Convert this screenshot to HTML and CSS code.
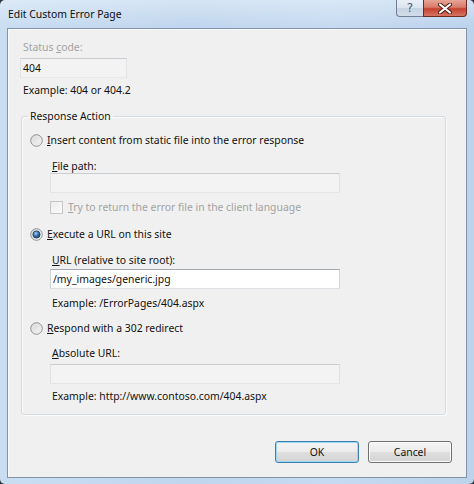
FILE: index.html
```html
<!DOCTYPE html>
<html>
<head>
<meta charset="utf-8">
<link rel="stylesheet" href="styles.css">
</head>
<body>
<div class="window">
  <div class="titlebar">
    <div class="title">Edit Custom Error Page</div>
    <div class="caption-buttons">
      <div class="cap-btn help"><span class="q">?</span></div>
      <div class="cap-btn close">
        <svg width="14" height="11" viewBox="0 0 14 11"><path d="M2 1.5 L12 9.5 M12 1.5 L2 9.5" stroke="#4a1a14" stroke-width="4" stroke-linecap="round"/><path d="M2 1.5 L12 9.5 M12 1.5 L2 9.5" stroke="#ffffff" stroke-width="2.2" stroke-linecap="round"/></svg>
      </div>
    </div>
  </div>
  <div class="client">
    <div class="status-label disabled">Status <u>c</u>ode:</div>
    <div class="textbox readonly status-box">404</div>
    <div class="status-example">Example: 404 or 404.2</div>

    <fieldset class="group">
      <legend>Response Action</legend>

      <div class="option opt1">
        <svg class="radio" width="13" height="13" viewBox="0 0 13 13"><defs><linearGradient id="rg1" x1="0" y1="0" x2="1" y2="1"><stop offset="0" stop-color="#d2d2d2"/><stop offset="1" stop-color="#fbfbfb"/></linearGradient></defs><circle cx="6.5" cy="6.5" r="5.8" fill="url(#rg1)" stroke="#8f9293" stroke-width="1"/><circle cx="6.5" cy="6.5" r="4" fill="none" stroke="#e8e8e8" stroke-width="1"/></svg>
        <span><u>I</u>nsert content from static file into the error response</span>
      </div>
      <div class="sub">
        <div class="field-label l-file"><u>F</u>ile path:</div>
        <div class="textbox disabled-box"></div>
        <div class="check-row disabled">
          <span class="checkbox"></span>
          <span><u>T</u>ry to return the error file in the client language</span>
        </div>
      </div>

      <div class="option opt2">
        <svg class="radio" width="13" height="13" viewBox="0 0 13 13"><defs><linearGradient id="rg2" x1="0" y1="0" x2="1" y2="1"><stop offset="0" stop-color="#d2d2d2"/><stop offset="1" stop-color="#fbfbfb"/></linearGradient><radialGradient id="dot" cx="0.4" cy="0.35" r="0.7"><stop offset="0" stop-color="#a9d3f5"/><stop offset="0.45" stop-color="#3f7cb9"/><stop offset="1" stop-color="#14395f"/></radialGradient></defs><circle cx="6.5" cy="6.5" r="5.8" fill="url(#rg2)" stroke="#8f9293" stroke-width="1"/><circle cx="6.5" cy="6.5" r="3.6" fill="url(#dot)" stroke="#1e3d5c" stroke-width="0.8"/></svg>
        <span><u>E</u>xecute a URL on this site</span>
      </div>
      <div class="sub">
        <div class="field-label l-url"><u>U</u>RL (relative to site root):</div>
        <div class="textbox normal">/my_images/generic.jpg</div>
        <div class="example ex-url">Example: /ErrorPages/404.aspx</div>
      </div>

      <div class="option opt3">
        <svg class="radio" width="13" height="13" viewBox="0 0 13 13"><defs><linearGradient id="rg3" x1="0" y1="0" x2="1" y2="1"><stop offset="0" stop-color="#d2d2d2"/><stop offset="1" stop-color="#fbfbfb"/></linearGradient></defs><circle cx="6.5" cy="6.5" r="5.8" fill="url(#rg3)" stroke="#8f9293" stroke-width="1"/><circle cx="6.5" cy="6.5" r="4" fill="none" stroke="#e8e8e8" stroke-width="1"/></svg>
        <span><u>R</u>espond with a 302 redirect</span>
      </div>
      <div class="sub">
        <div class="field-label l-abs"><u>A</u>bsolute URL:</div>
        <div class="textbox disabled-box abs-box"></div>
        <div class="example ex-abs">Example: http://www.contoso.com/404.aspx</div>
      </div>
    </fieldset>

    <div class="buttons">
      <div class="btn default">OK</div>
      <div class="btn">Cancel</div>
    </div>
  </div>
</div>
</body>
</html>
```
FILE: styles.css
```css
html, body {
  margin: 0;
  padding: 0;
  background: #30363f;
}
body {
  font-family: "Noto Sans", "Open Sans", sans-serif;
  font-size: 10.4px;
  color: #111;
}
.window {
  width: 474px;
  height: 484px;
  box-sizing: border-box;
  padding: 0 7px 6px 7px;
  display: flex;
  flex-direction: column;
  border-radius: 5px;
  background:
    linear-gradient(180deg, rgba(255,255,255,0.35) 0px, rgba(255,255,255,0) 26px),
    linear-gradient(90deg, #cadef2 0%, #c0d6ee 40%, #c6dbf1 70%, #bcd3ec 100%);
}
.titlebar {
  height: 28px;
  flex: none;
  display: flex;
  justify-content: space-between;
  align-items: flex-start;
}
.title {
  margin: 6px 0 0 1px;
  line-height: 16px;
  font-size: 10.4px;
  color: #0c0c0c;
}
.caption-buttons {
  display: flex;
}
.cap-btn {
  height: 17px;
  box-sizing: border-box;
  display: flex;
  align-items: center;
  justify-content: center;
  border: 1px solid #6f7f95;
  border-top: none;
}
.help {
  width: 27px;
  border-right: none;
  border-radius: 0 0 0 4px;
  background: linear-gradient(180deg, #e9eff6 0%, #dbe4ef 48%, #c7d3e2 52%, #d3dde9 100%);
}
.help .q {
  font-family: "DejaVu Sans", sans-serif;
  font-size: 12px;
  line-height: 12px;
  color: #4e5c70;
}
.close {
  width: 44px;
  border-color: #6b2b22;
  border-radius: 0 0 4px 0;
  background: linear-gradient(180deg, #e6a596 0%, #d97a69 45%, #c4412f 55%, #d57563 100%);
}
.client {
  flex: 1;
  background: #f0f0f0;
  border: 1px solid #8293a8;
  box-shadow: inset 1px 1px 0 #fafafa;
  padding: 10px 0 0 0;
  display: flex;
  flex-direction: column;
}
.disabled { color: #a3a3a3; }
.status-label {
  margin-left: 15px;
  line-height: 16px;
  height: 16px;
}
.textbox {
  height: 20px;
  box-sizing: border-box;
  line-height: 18px;
  padding-left: 2px;
  border: 1px solid #cfd3d7;
}
.status-box {
  margin: 3px 0 0 12px;
  width: 107px;
  background: #f3f3f3;
  border-color: #c9cdd2 #e0e3e6 #e6e8ea #e0e3e6;
  padding-left: 2px;
}
.status-example {
  margin: 4px 0 0 15px;
  line-height: 16px;
  height: 16px;
}
.group {
  margin: 10px 0 0 13px;
  width: 425px;
  box-sizing: border-box;
  border: 1px solid #d3dbe1;
  border-radius: 3px;
  box-shadow: inset 1px 1px 0 #fcfcfc, 1px 1px 0 #fcfcfc;
  padding: 0 0 10px 0;
  min-width: 0;
}
.group legend {
  margin-left: 6px;
  padding: 0 2px;
  line-height: 16px;
  height: 16px;
}
.option {
  display: flex;
  align-items: center;
  gap: 4px;
  height: 16px;
  padding-left: 8px;
}
.radio { flex: none; }
.opt1 { margin-top: 8px; }
.opt2 { margin-top: 11px; }
.opt3 { margin-top: 9px; }
.sub {
  padding-left: 28px;
  display: flex;
  flex-direction: column;
}
.field-label {
  margin-left: 2px;
  height: 14px;
  line-height: 14px;
}
.l-file { margin-top: 11px; }
.l-url { margin-top: 11px; }
.l-abs { margin-top: 10px; }
.sub .textbox {
  width: 290px;
}
.l-url + .textbox { margin-top: 2px; }
.abs-box { margin-top: 4px; }
.disabled-box {
  background: #f3f3f3;
  border-color: #c9cdd2 #dfe2e5 #e4e6e8 #dfe2e5;
}
.normal {
  background: #ffffff;
  border-color: #a4aab2 #d0d4da #dde1e6 #d0d4da;
  color: #111;
}
.check-row {
  margin-top: 6px;
  display: flex;
  align-items: center;
  gap: 5px;
  height: 16px;
}
.checkbox {
  width: 13px;
  height: 13px;
  box-sizing: border-box;
  border: 1px solid #c5c7c9;
  background: linear-gradient(135deg, #ececec, #fbfbfb);
  flex: none;
}
.example {
  margin-left: 2px;
  line-height: 16px;
  height: 16px;
}
.ex-url { margin-top: 6px; }
.ex-abs { margin-top: 4px; }
.buttons {
  margin-top: 26px;
  margin-right: 14px;
  display: flex;
  justify-content: flex-end;
  gap: 9px;
}
.btn {
  width: 84px;
  height: 22px;
  box-sizing: border-box;
  border: 1px solid #707070;
  border-radius: 3px;
  background: linear-gradient(180deg, #f4f4f4 0%, #ececec 48%, #dfdfdf 52%, #d3d3d3 100%);
  box-shadow: inset 0 0 0 1px #fbfbfb;
  text-align: center;
  line-height: 20px;
  color: #111;
}
.btn.default {
  border-color: #3c7fb1;
  box-shadow: inset 0 0 0 1px #9fd6f3;
}
```
